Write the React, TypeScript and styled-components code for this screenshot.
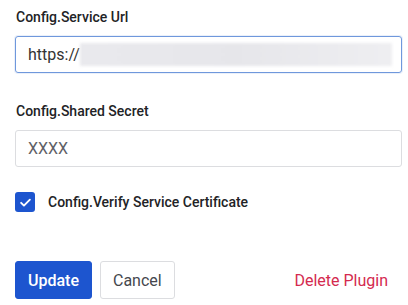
import React from "react";
import styled, { createGlobalStyle } from "styled-components";

const Global = createGlobalStyle`
  html, body { margin: 0; padding: 0; background: #ffffff; }
  body { font-family: Roboto, "Liberation Sans", Arial, sans-serif; -webkit-font-smoothing: antialiased; }
`;

const Form = styled.div`
  width: 408px;
  height: 305px;
  box-sizing: border-box;
  padding: 9px 6px 0 15px;
  display: flex;
  flex-direction: column;
`;

const Label = styled.div<{ $top?: number }>`
  font-size: 14px;
  line-height: 16px;
  font-weight: 500;
  color: #222326;
  margin-top: ${(p) => p.$top ?? 0}px;
  margin-bottom: 11px;
  padding-left: 1px;
`;

const Field = styled.div<{ $focused?: boolean }>`
  height: 37px;
  box-sizing: border-box;
  border: 1px solid ${(p) => (p.$focused ? "#6f98dc" : "#dcdde0")};
  border-radius: 3px;
  display: flex;
  align-items: center;
  padding: 0 9px 0 12px;
  font-size: 16px;
  color: ${(p) => (p.$focused ? "#333" : "#5f6166")};
  box-shadow: ${(p) => (p.$focused ? "0 0 0 1px rgba(111,152,220,0.15)" : "none")};
  overflow: hidden;
`;

const Blur = styled.span`
  flex: 1;
  height: 23px;
  background: linear-gradient(90deg, #e9e9ed 0%, #e6e6ea 50%, #eeeef1 100%);
  filter: blur(1.5px);
`;

const CheckRow = styled.label`
  display: flex;
  align-items: center;
  gap: 13px;
  margin-top: 25px;
  font-size: 14px;
  font-weight: 500;
  color: #222326;
`;

const Box = styled.span`
  width: 20px;
  height: 20px;
  border-radius: 3px;
  background: #1d55cf;
  display: flex;
  align-items: center;
  justify-content: center;
`;

const Actions = styled.div`
  display: flex;
  align-items: center;
  margin-top: 49px;
  gap: 8px;
`;

const Button = styled.button<{ $variant: "primary" | "secondary" | "danger" }>`
  height: 38px;
  box-sizing: border-box;
  padding: 0 ${(p) => (p.$variant === "danger" ? 13 : 12)}px;
  border-radius: 3px;
  font-family: inherit;
  font-size: 16px;
  font-weight: ${(p) => (p.$variant === "primary" ? 500 : 400)};
  cursor: pointer;
  border: 1px solid
    ${(p) => (p.$variant === "primary" ? "#1d55cf" : p.$variant === "secondary" ? "#dcdde0" : "transparent")};
  background: ${(p) => (p.$variant === "primary" ? "#1d55cf" : "#ffffff")};
  color: ${(p) => (p.$variant === "primary" ? "#ffffff" : p.$variant === "secondary" ? "#45474d" : "#d42a4f")};
  margin-left: ${(p) => (p.$variant === "danger" ? "auto" : "0")};
`;

export default function App() {
  return (
    <>
      <Global />
      <Form>
        <Label>Config.Service Url</Label>
        <Field $focused>
          <span>https://</span>
          <Blur />
        </Field>
        <Label $top={30}>Config.Shared Secret</Label>
        <Field>XXXX</Field>
        <CheckRow>
          <Box>
            <svg width="15" height="15" viewBox="0 0 24 24" fill="none">
              <path d="M5 12.5l4.5 4.5L19 7.5" stroke="#fff" strokeWidth="3" strokeLinecap="round" strokeLinejoin="round" />
            </svg>
          </Box>
          Config.Verify Service Certificate
        </CheckRow>
        <Actions>
          <Button $variant="primary">Update</Button>
          <Button $variant="secondary">Cancel</Button>
          <Button $variant="danger">Delete Plugin</Button>
        </Actions>
      </Form>
    </>
  );
}
